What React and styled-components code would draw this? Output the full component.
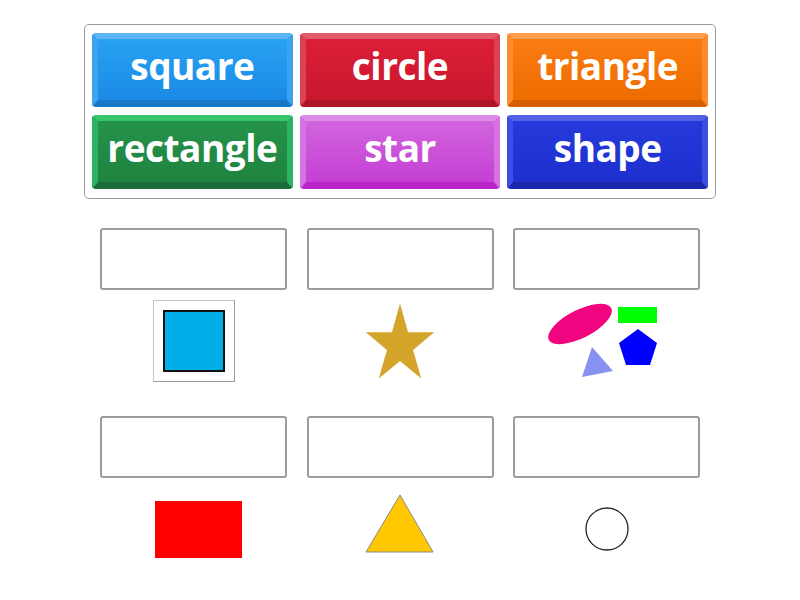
import React from 'react'
import styled, { createGlobalStyle } from 'styled-components'

const GlobalStyle = createGlobalStyle`
    body {
        margin: 0;
        background: #ffffff;
        font-family: "Open Sans", "Liberation Sans", sans-serif;
    }
`

const Page = styled.div`
    display: flex;
    flex-direction: column;
    align-items: center;
    padding-top: 24px;
`

const TilePanel = styled.div`
    width: 632px;
    box-sizing: border-box;
    border: 1px solid #9a9a9a;
    border-radius: 5px;
    padding: 8px 7px 9px 7px;
    display: grid;
    grid-template-columns: repeat(3, 1fr);
    column-gap: 7px;
    row-gap: 8px;
`

const Tile = styled.div`
    height: 74px;
    box-sizing: border-box;
    border-style: solid;
    border-width: 6px 6px 7px 6px;
    border-color: ${(p) => `${p.top} ${p.side} ${p.bottom} ${p.side}`};
    border-radius: 4px;
    background: ${(p) => p.face};
    display: flex;
    align-items: center;
    justify-content: center;
    color: #ffffff;
    font-size: 37px;
    font-weight: 700;
    letter-spacing: -0.5px;
    line-height: 1;
    padding-bottom: 9px;
    white-space: nowrap;
`

const Board = styled.div`
    margin-top: 29px;
    width: 600px;
    display: grid;
    grid-template-columns: repeat(3, 187px);
    justify-content: space-between;
    row-gap: 24px;
`

const Cell = styled.div`
    display: flex;
    flex-direction: column;
`

const DropBox = styled.div`
    height: 62px;
    box-sizing: border-box;
    border: 2px solid #9c9c9c;
    border-radius: 3px;
    background: #fff;
`

const Picture = styled.div`
    height: 102px;
    display: flex;
    align-items: center;
    justify-content: center;
`

const Frame = styled.div`
    width: 82px;
    height: 82px;
    box-sizing: border-box;
    border: 1px solid #c4c4c4;
    border-right-color: #9a9a9a;
    border-bottom-color: #9a9a9a;
    display: flex;
    align-items: center;
    justify-content: center;
`

const BlueSquare = styled.div`
    width: 62px;
    height: 62px;
    box-sizing: border-box;
    background: #00aee8;
    border: 2px solid #111;
`

const RedRect = styled.div`
    width: 87px;
    height: 57px;
    background: #ff0000;
    margin-left: 10px;
`

const Shift = styled.div`
    display: flex;
    margin: ${(p) => p.margin || '0'};
`

const tiles = [
    { word: 'square', top: '#5cb6f3', side: '#3ca4ef', bottom: '#1878c8', face: 'linear-gradient(#28a2f2, #1a8ae6)' },
    { word: 'circle', top: '#e25c6c', side: '#db4254', bottom: '#b01428', face: 'linear-gradient(#dc1e36, #c8182e)' },
    { word: 'triangle', top: '#ff9e4c', side: '#ff8c2c', bottom: '#d65e00', face: 'linear-gradient(#fa7c12, #ee6c00)' },
    { word: 'rectangle', top: '#36c66e', side: '#2fb262', bottom: '#1a6c38', face: 'linear-gradient(#25924b, #1f843f)' },
    { word: 'star', top: '#de8ce8', side: '#d672e2', bottom: '#b826c8', face: 'linear-gradient(#d264de, #c440d4)' },
    { word: 'shape', top: '#5262e2', side: '#3c4ee0', bottom: '#1a28b0', face: 'linear-gradient(#2539dc, #1e30ce)' },
]

const Star = () => (
    <svg width="70" height="76" viewBox="0 0 70 76">
        <polygon
            fill="#d4a52a"
            points="35,0.5 43.1,29.2 69.2,29.2 48.1,46.9 56.2,75.6 35,57.9 13.8,75.6 21.9,46.9 0.8,29.2 26.9,29.2"
        />
    </svg>
)

const Mixed = () => (
    <svg width="115" height="81" viewBox="0 0 115 81">
        <ellipse cx="35" cy="23" rx="35" ry="14" fill="#f0047f" transform="rotate(-27 35 23)" />
        <rect x="73" y="6" width="39" height="16" fill="#00ff00" />
        <polygon points="93,28 112,42 105,64 81,64 74,42" fill="#0000ff" />
        <polygon points="37,76 47,46 68,70" fill="#8890f0" />
    </svg>
)

const Triangle = () => (
    <svg width="70" height="60" viewBox="0 0 70 60">
        <polygon points="35,1 68,58 1,58" fill="#ffc800" stroke="#8a8a8a" strokeWidth="1" />
    </svg>
)

const Circle = () => (
    <svg width="46" height="46" viewBox="0 0 46 46">
        <circle cx="23" cy="23" r="21" fill="#fff" stroke="#222" strokeWidth="1.3" />
    </svg>
)

const pictures = [
    <Frame><BlueSquare /></Frame>,
    <Star />,
    <Shift margin="0 8px 0 0"><Mixed /></Shift>,
    <RedRect />,
    <Shift margin="0 0 10px 0"><Triangle /></Shift>,
    <Circle />,
]

export default function App() {
    return (
        <>
            <GlobalStyle />
            <Page>
                <TilePanel>
                    {tiles.map((t) => (
                        <Tile key={t.word} top={t.top} side={t.side} bottom={t.bottom} face={t.face}>
                            {t.word}
                        </Tile>
                    ))}
                </TilePanel>
                <Board>
                    {pictures.map((pic, i) => (
                        <Cell key={i}>
                            <DropBox />
                            <Picture>{pic}</Picture>
                        </Cell>
                    ))}
                </Board>
            </Page>
        </>
    )
}
